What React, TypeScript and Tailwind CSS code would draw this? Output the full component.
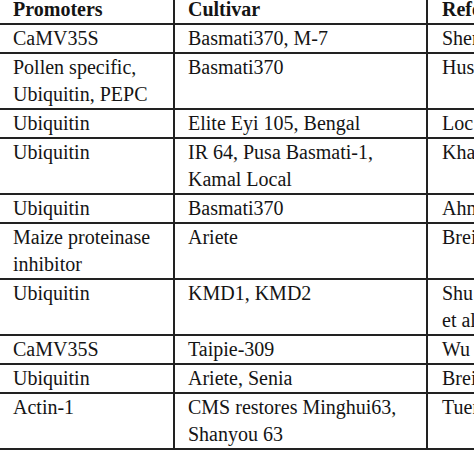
import React from 'react';

type Row = { promoter: string[]; cultivar: string[]; ref: string[] };

const rows: Row[] = [
  { promoter: ['CaMV35S'], cultivar: ['Basmati370, M-7'], ref: ['Sheng et al. (2003)'] },
  { promoter: ['Pollen specific,', 'Ubiquitin, PEPC'], cultivar: ['Basmati370'], ref: ['Husnain et al. (2002)'] },
  { promoter: ['Ubiquitin'], cultivar: ['Elite Eyi 105, Bengal'], ref: ['Loc et al. (2002)'] },
  { promoter: ['Ubiquitin'], cultivar: ['IR 64, Pusa Basmati-1,', 'Kamal Local'], ref: ['Khanna and Raina (2002)'] },
  { promoter: ['Ubiquitin'], cultivar: ['Basmati370'], ref: ['Ahmad et al. (2002)'] },
  { promoter: ['Maize proteinase', 'inhibitor'], cultivar: ['Ariete'], ref: ['Breitler et al. (2001)'] },
  { promoter: ['Ubiquitin'], cultivar: ['KMD1, KMD2'], ref: ['Shu', 'et al. (2000)'] },
  { promoter: ['CaMV35S'], cultivar: ['Taipie-309'], ref: ['Wu et al. (1997)'] },
  { promoter: ['Ubiquitin'], cultivar: ['Ariete, Senia'], ref: ['Breitler et al. (2004)'] },
  { promoter: ['Actin-1'], cultivar: ['CMS restores Minghui63,', 'Shanyou 63'], ref: ['Tuerlinckx et al. (2000)'] },
];

function Lines({ items }: { items: string[] }) {
  return (
    <>
      {items.map((t, i) => (
        <div key={i} className="whitespace-nowrap">
          {t}
        </div>
      ))}
    </>
  );
}

export default function App() {
  return (
    <div
      className="w-[474px] h-[474px] overflow-hidden bg-white text-[#141414] text-[20px] leading-[27px]"
      style={{ fontFamily: '"Liberation Serif", "Times New Roman", serif' }}
    >
      <div className="-mt-[4px] w-[640px]">
        <div className="flex border-b-2 border-[#222] font-bold">
          <div className="w-[175px] shrink-0 border-r-2 border-[#222] pl-[13px]">Promoters</div>
          <div className="w-[253px] shrink-0 border-r-2 border-[#222] pl-[13px]">Cultivar</div>
          <div className="pl-[14px]">Reference</div>
        </div>
        {rows.map((r, i) => (
          <div key={i} className="flex border-b-2 border-[#222]">
            <div className="w-[175px] shrink-0 border-r-2 border-[#222] pl-[13px]">
              <Lines items={r.promoter} />
            </div>
            <div className="w-[253px] shrink-0 border-r-2 border-[#222] pl-[13px]">
              <Lines items={r.cultivar} />
            </div>
            <div className="pl-[14px]">
              <Lines items={r.ref} />
            </div>
          </div>
        ))}
      </div>
    </div>
  );
}
